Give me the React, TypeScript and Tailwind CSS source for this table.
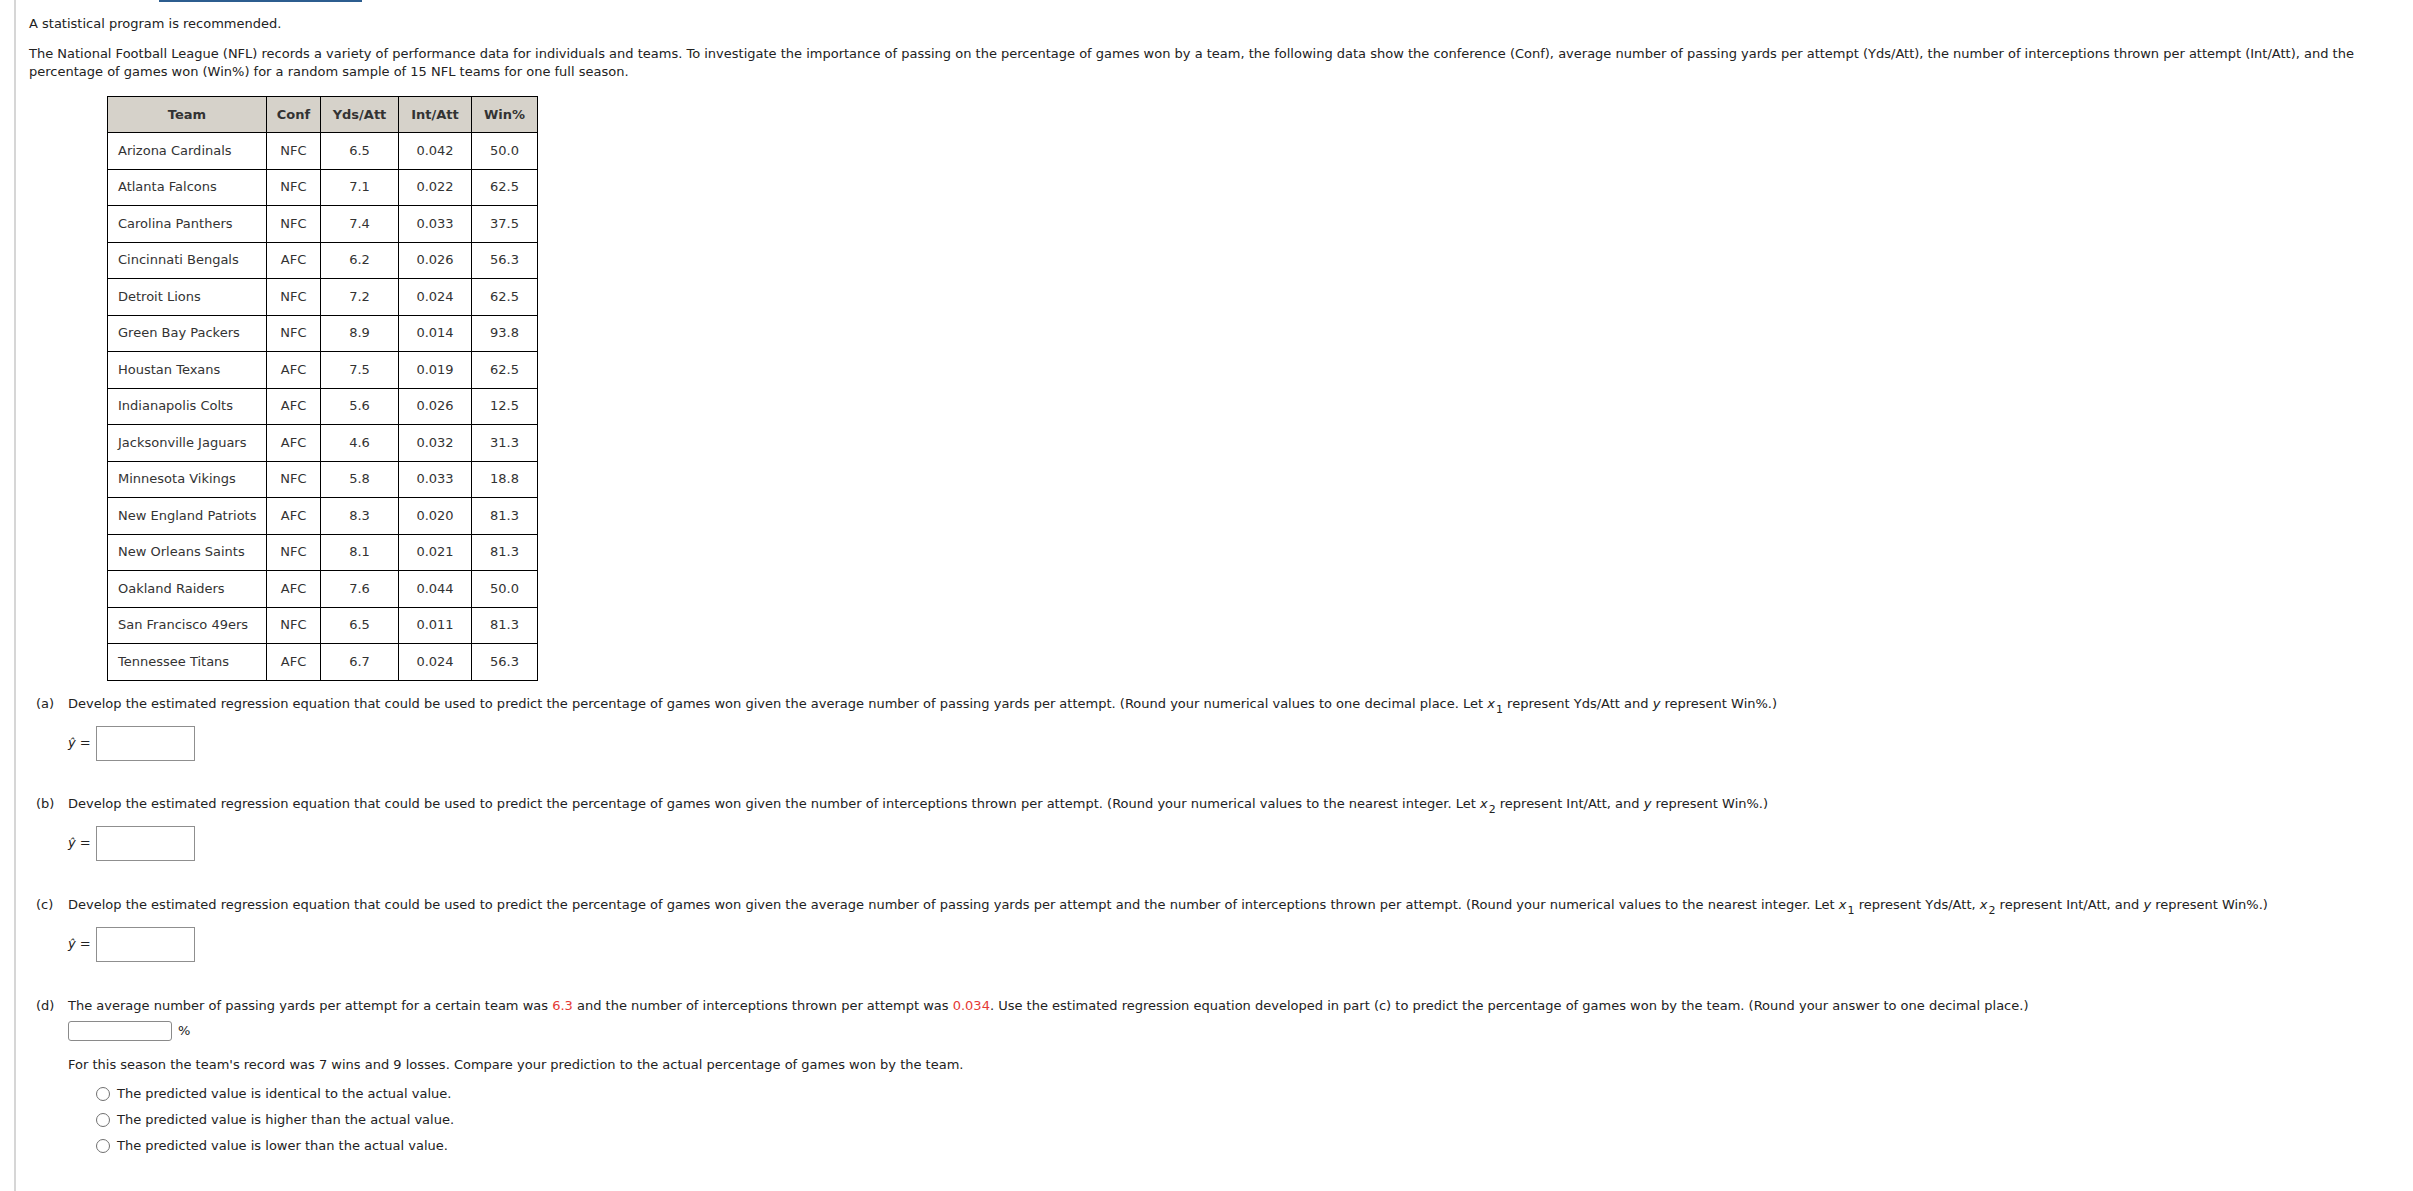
const teams = [
  { team: 'Arizona Cardinals', conf: 'NFC', yds: '6.5', int: '0.042', win: '50.0' },
  { team: 'Atlanta Falcons', conf: 'NFC', yds: '7.1', int: '0.022', win: '62.5' },
  { team: 'Carolina Panthers', conf: 'NFC', yds: '7.4', int: '0.033', win: '37.5' },
  { team: 'Cincinnati Bengals', conf: 'AFC', yds: '6.2', int: '0.026', win: '56.3' },
  { team: 'Detroit Lions', conf: 'NFC', yds: '7.2', int: '0.024', win: '62.5' },
  { team: 'Green Bay Packers', conf: 'NFC', yds: '8.9', int: '0.014', win: '93.8' },
  { team: 'Houstan Texans', conf: 'AFC', yds: '7.5', int: '0.019', win: '62.5' },
  { team: 'Indianapolis Colts', conf: 'AFC', yds: '5.6', int: '0.026', win: '12.5' },
  { team: 'Jacksonville Jaguars', conf: 'AFC', yds: '4.6', int: '0.032', win: '31.3' },
  { team: 'Minnesota Vikings', conf: 'NFC', yds: '5.8', int: '0.033', win: '18.8' },
  { team: 'New England Patriots', conf: 'AFC', yds: '8.3', int: '0.020', win: '81.3' },
  { team: 'New Orleans Saints', conf: 'NFC', yds: '8.1', int: '0.021', win: '81.3' },
  { team: 'Oakland Raiders', conf: 'AFC', yds: '7.6', int: '0.044', win: '50.0' },
  { team: 'San Francisco 49ers', conf: 'NFC', yds: '6.5', int: '0.011', win: '81.3' },
  { team: 'Tennessee Titans', conf: 'AFC', yds: '6.7', int: '0.024', win: '56.3' },
];

const options = [
  'The predicted value is identical to the actual value.',
  'The predicted value is higher than the actual value.',
  'The predicted value is lower than the actual value.',
];

// italic variable with a subscript, e.g. x₁
function Var({ sub }: { sub: string }) {
  return (
    <>
      <i>x</i>
      <span className="relative top-[5px] ml-[1px] text-[11px] leading-none">{sub}</span>
    </>
  );
}

function AnswerRow() {
  return (
    <div className="mt-[13px] ml-[32px] flex items-center">
      <span>
        <i>ŷ</i> =
      </span>
      <div className="ml-[5px] h-[35px] w-[99px] border border-[#8f8f8f] bg-white" />
    </div>
  );
}

function Part({ label, children }: { label: string; children: React.ReactNode }) {
  return (
    <div className="flex">
      <span className="w-[32px] shrink-0">{label}</span>
      <div className="flex-1">{children}</div>
    </div>
  );
}

export default function App() {
  return (
    <div className="min-h-screen bg-white font-['DejaVu_Sans',Verdana,sans-serif] text-[13px] leading-[18px] text-[#222]">
      <div className="ml-[14px] min-h-screen border-l-2 border-[#d6d6d6] pl-[13px] pr-[23px]">
        <div className="ml-[130px] h-[2px] w-[203px] bg-[#2c5d8f]" />
        <p className="mt-[13px]">A statistical program is recommended.</p>
        <p className="mt-[12px]">
          The National Football League (NFL) records a variety of performance data for individuals and teams. To
          investigate the importance of passing on the percentage of games won by a team, the following data show the
          conference (Conf), average number of passing yards per attempt (Yds/Att), the number of interceptions thrown
          per attempt (Int/Att), and the percentage of games won (Win%) for a random sample of 15 NFL teams for one full
          season.
        </p>

        <table className="mt-[15px] ml-[78px] border-collapse border border-black text-[#333]">
          <thead>
            <tr className="h-[36px] bg-[#d6d2ca]">
              <th className="w-[159px] border border-black font-bold">Team</th>
              <th className="w-[54px] border border-black font-bold">Conf</th>
              <th className="w-[78px] border border-black font-bold">Yds/Att</th>
              <th className="w-[73px] border border-black font-bold">Int/Att</th>
              <th className="w-[66px] border border-black font-bold">Win%</th>
            </tr>
          </thead>
          <tbody>
            {teams.map((t) => (
              <tr key={t.team} className="h-[36.5px] bg-white">
                <td className="border border-black pl-[10px] text-left">{t.team}</td>
                <td className="border border-black text-center">{t.conf}</td>
                <td className="border border-black text-center">{t.yds}</td>
                <td className="border border-black text-center">{t.int}</td>
                <td className="border border-black text-center">{t.win}</td>
              </tr>
            ))}
          </tbody>
        </table>

        <div className="mt-[14px] ml-[7px]">
          <Part label="(a)">
            Develop the estimated regression equation that could be used to predict the percentage of games won given
            the average number of passing yards per attempt. (Round your numerical values to one decimal place. Let{' '}
            <Var sub="1" /> represent Yds/Att and <i>y</i> represent Win%.)
          </Part>
          <AnswerRow />

          <div className="mt-[34px]">
            <Part label="(b)">
              Develop the estimated regression equation that could be used to predict the percentage of games won
              given the number of interceptions thrown per attempt. (Round your numerical values to the nearest integer.
              Let <Var sub="2" /> represent Int/Att, and <i>y</i> represent Win%.)
            </Part>
          </div>
          <AnswerRow />

          <div className="mt-[35px]">
            <Part label="(c)">
              Develop the estimated regression equation that could be used to predict the percentage of games won
              given the average number of passing yards per attempt and the number of interceptions thrown per attempt.
              (Round your numerical values to the nearest integer. Let <Var sub="1" /> represent Yds/Att,{' '}
              <Var sub="2" /> represent Int/Att, and <i>y</i> represent Win%.)
            </Part>
          </div>
          <AnswerRow />

          <div className="mt-[35px]">
            <Part label="(d)">
              The average number of passing yards per attempt for a certain team was{' '}
              <span className="text-[#e53935]">6.3</span> and the number of interceptions thrown per attempt was{' '}
              <span className="text-[#e53935]">0.034</span>. Use the estimated regression equation developed in part (c)
              to predict the percentage of games won by the team. (Round your answer to one decimal place.)
              <div className="mt-[6px] flex items-center">
                <div className="h-[20px] w-[104px] rounded-[3px] border border-[#8a8a8a] bg-white" />
                <span className="ml-[6px]">%</span>
              </div>
              <p className="mt-[15px]">
                For this season the team's record was 7 wins and 9 losses. Compare your prediction to the actual
                percentage of games won by the team.
              </p>
              <div className="mt-[11px] flex flex-col gap-[8px]">
                {options.map((o) => (
                  <label key={o} className="ml-[28px] flex items-center">
                    <span className="h-[14px] w-[14px] rounded-full border border-[#707070] bg-white" />
                    <span className="ml-[7px]">{o}</span>
                  </label>
                ))}
              </div>
            </Part>
          </div>
        </div>
      </div>
    </div>
  );
}
